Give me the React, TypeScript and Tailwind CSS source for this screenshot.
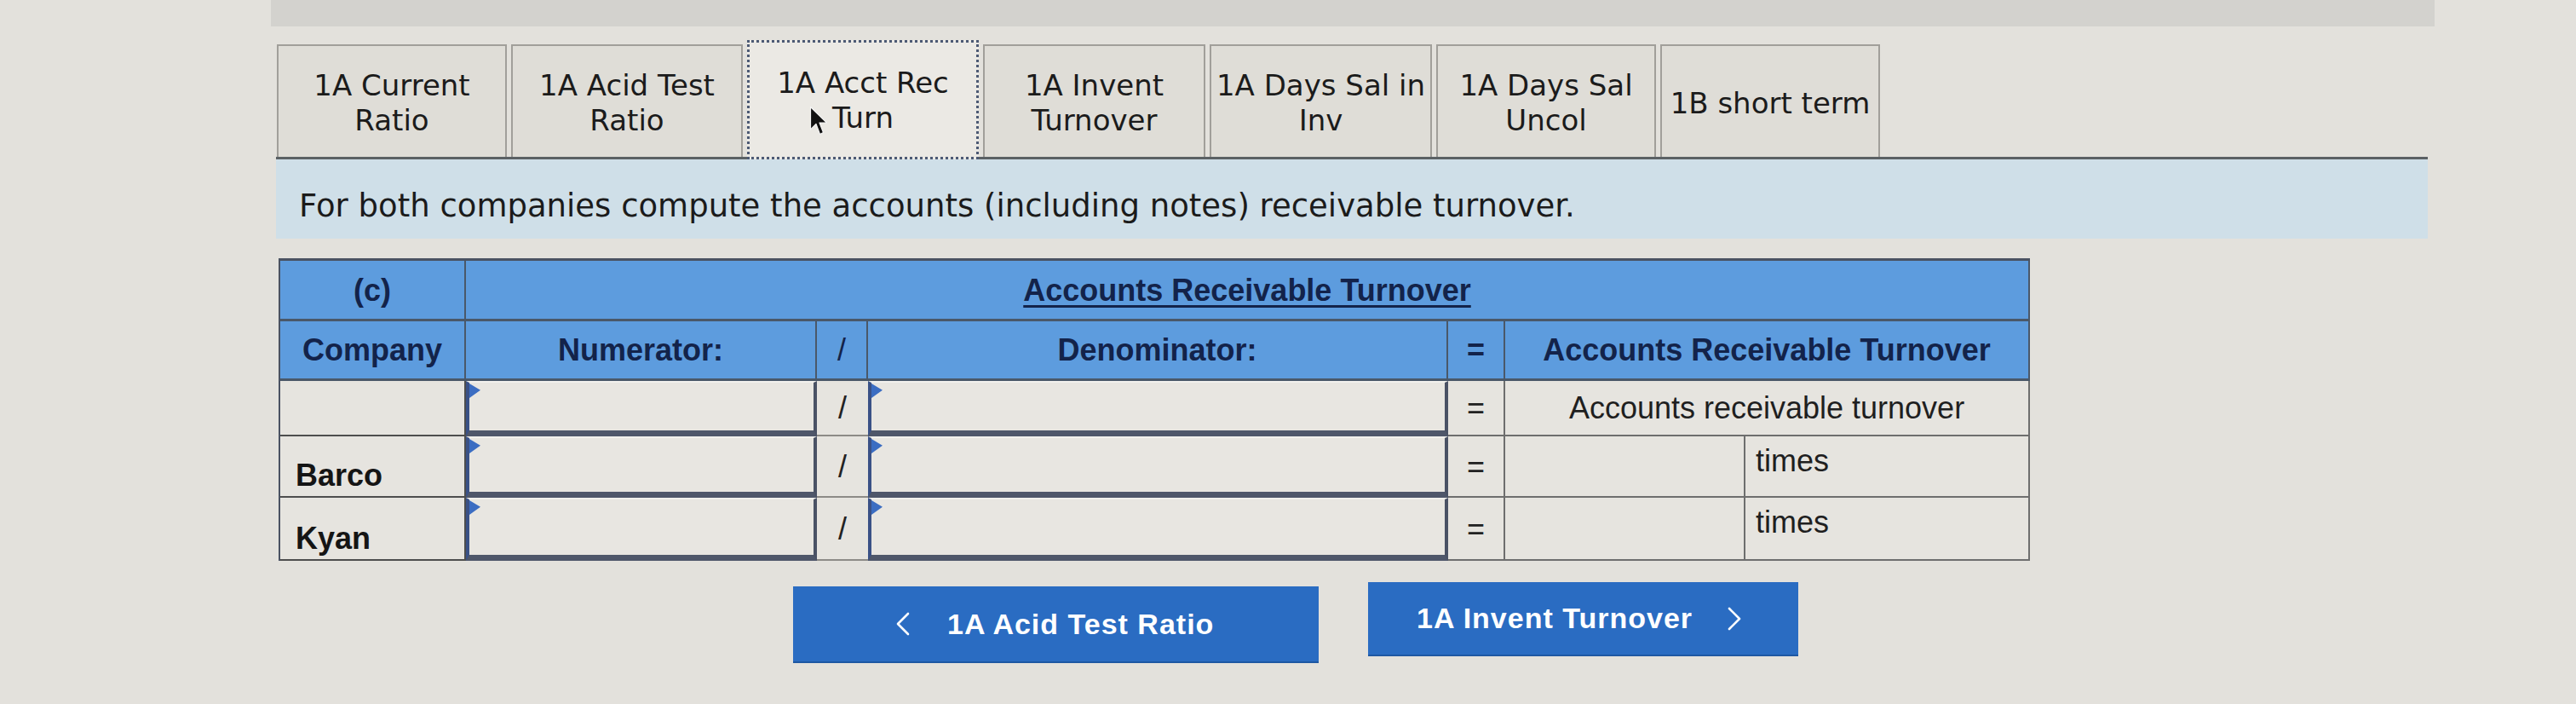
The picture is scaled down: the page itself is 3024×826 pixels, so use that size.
import React from "react";

const tabs: { lines: string[]; cls: string; active?: boolean }[] = [
  { lines: ["1A Current", "Ratio"], cls: "w-[270px]" },
  { lines: ["1A Acid Test", "Ratio"], cls: "w-[272px]" },
  { lines: ["1A Acct Rec", "Turn"], cls: "w-[272px]", active: true },
  { lines: ["1A Invent", "Turnover"], cls: "w-[261px]" },
  { lines: ["1A Days Sal in", "Inv"], cls: "w-[261px]" },
  { lines: ["1A Days Sal", "Uncol"], cls: "w-[258px]" },
  { lines: ["1B short term"], cls: "w-[258px]" },
];

function Cursor() {
  return (
    <svg
      className="absolute left-[70px] top-[74px]"
      width="24"
      height="36"
      viewBox="0 0 24 36"
    >
      <path
        d="M1.5 1.5 L1.5 28 L8 21.5 L12.5 33.5 L16.5 31.5 L12 20 L20.5 20 Z"
        fill="#111"
        stroke="#f4f4f4"
        strokeWidth="1.2"
        strokeLinejoin="round"
      />
    </svg>
  );
}

function Tab({ lines, cls, active }: { lines: string[]; cls: string; active?: boolean }) {
  if (active) {
    return (
      <div
        className={`${cls} relative h-[140px] mb-[-3px] bg-[#ebe9e4] border-[3px] border-dotted border-[#4d5a74] flex flex-col items-center justify-center pt-[2px] text-[34px] leading-[41px] text-[#1b1b1b]`}
      >
        {lines.map((l) => (
          <div key={l}>{l}</div>
        ))}
        <Cursor />
      </div>
    );
  }
  return (
    <div
      className={`${cls} h-[132px] bg-[#dfddd7] border-t-2 border-l-2 border-r-2 border-[#a19f9a] flex flex-col items-center justify-center pt-[4px] text-[34px] leading-[41px] text-[#1b1b1b]`}
    >
      {lines.map((l) => (
        <div key={l}>{l}</div>
      ))}
    </div>
  );
}

function HeadCell({
  children,
  cls = "",
}: {
  children?: React.ReactNode;
  cls?: string;
}) {
  return (
    <div
      className={`bg-[#5d9cde] border-r-2 border-b-[3px] border-[#4a5869] flex items-center justify-center font-bold text-[#13234a] ${cls}`}
    >
      {children}
    </div>
  );
}

function InputCell() {
  return (
    <div className="relative bg-[#e8e6e1] border-t-2 border-t-[#f2f1ed] border-l-4 border-l-[#3a5186] border-r-4 border-r-[#4a5265] border-b-[7px] border-b-[#4f576a]">
      <div className="absolute left-0 top-[1px] w-[13px] h-[17px] bg-[#3b6dc2] [clip-path:polygon(0_0,100%_45%,0_100%)]" />
    </div>
  );
}

function CompanyCell({ name }: { name?: string }) {
  return (
    <div className="bg-[#e6e4df] border-r-2 border-b-2 border-[#4e4e4e] flex items-end pl-[18px] pb-[4px] font-bold text-[#151515]">
      {name}
    </div>
  );
}

function SlashCell() {
  return (
    <div className="bg-[#e6e4df] border-b-2 border-[#8d8b87] flex items-center justify-center text-[#222]">
      /
    </div>
  );
}

function EqCell() {
  return (
    <div className="bg-[#e6e4df] border-r-2 border-b-2 border-[#6e6e6e] flex items-center justify-center text-[#222]">
      =
    </div>
  );
}

function Chevron({ dir }: { dir: "left" | "right" }) {
  return (
    <svg width="18" height="28" viewBox="0 0 18 28">
      <polyline
        points={dir === "left" ? "15,2 3,14 15,26" : "3,2 15,14 3,26"}
        fill="none"
        stroke="#fff"
        strokeWidth="2.6"
        strokeLinecap="round"
        strokeLinejoin="round"
      />
    </svg>
  );
}

export default function App() {
  return (
    <div className="w-[3024px] h-[826px] overflow-hidden bg-[#e3e1dc]">
      {/* top gray band */}
      <div className="ml-[318px] w-[2540px] h-[31px] bg-[#d3d2ce]" />

      {/* tabs */}
      <div
        className="ml-[325px] mt-[16px] h-[137px] flex items-end gap-[5px]"
        style={{ fontFamily: "'DejaVu Sans', Verdana, sans-serif" }}
      >
        {tabs.map((t) => (
          <Tab key={t.lines.join(" ")} {...t} />
        ))}
      </div>

      {/* description band */}
      <div
        className="ml-[324px] w-[2526px] h-[96px] bg-[#cfdfe8] border-t-[3px] border-[#5b6164] pt-[33px] pl-[27px] text-[37px] leading-[44px] text-[#1b1b1b]"
        style={{ fontFamily: "'DejaVu Sans', Verdana, sans-serif" }}
      >
        For both companies compute the accounts (including notes) receivable turnover.
      </div>

      {/* table */}
      <div
        className="ml-[327px] mt-[23px] w-[2056px] border-t-[3px] border-l-2 border-[#4a5262] grid grid-cols-[218px_412px_60px_681px_67px_282px_334px] grid-rows-[71px_70px_65px_72px_74px] text-[36px] leading-[41px]"
        style={{ fontFamily: "'Liberation Sans', Arial, sans-serif" }}
      >
        {/* row 1 */}
        <HeadCell>(c)</HeadCell>
        <HeadCell cls="col-span-6">
          <span className="underline decoration-[3px] underline-offset-[5px] decoration-[#13234a]">
            Accounts Receivable Turnover
          </span>
        </HeadCell>

        {/* row 2 */}
        <HeadCell>Company</HeadCell>
        <HeadCell>Numerator:</HeadCell>
        <HeadCell cls="font-normal">/</HeadCell>
        <HeadCell>Denominator:</HeadCell>
        <HeadCell>=</HeadCell>
        <HeadCell cls="col-span-2">Accounts Receivable Turnover</HeadCell>

        {/* row 3 */}
        <CompanyCell />
        <InputCell />
        <SlashCell />
        <InputCell />
        <EqCell />
        <div className="col-span-2 bg-[#e6e4df] border-r-2 border-b-2 border-[#6e6e6e] flex items-center justify-center text-[#1f1f1f]">
          Accounts receivable turnover
        </div>

        {/* row 4 */}
        <CompanyCell name="Barco" />
        <InputCell />
        <SlashCell />
        <InputCell />
        <EqCell />
        <div className="bg-[#e6e4df] border-r-2 border-b-2 border-[#6e6e6e]" />
        <div className="bg-[#e6e4df] border-r-2 border-b-2 border-[#6e6e6e] pl-[12px] pt-[8px] text-[#1f1f1f]">
          times
        </div>

        {/* row 5 */}
        <CompanyCell name="Kyan" />
        <InputCell />
        <SlashCell />
        <InputCell />
        <EqCell />
        <div className="bg-[#e6e4df] border-r-2 border-b-2 border-[#6e6e6e]" />
        <div className="bg-[#e6e4df] border-r-2 border-b-2 border-[#6e6e6e] pl-[12px] pt-[8px] text-[#1f1f1f]">
          times
        </div>
      </div>

      {/* nav buttons */}
      <div
        className="ml-[931px] mt-[25px] flex items-start gap-[58px] text-[34px] tracking-[1px] font-bold text-white"
        style={{ fontFamily: "'Liberation Sans', Arial, sans-serif" }}
      >
        <div className="mt-[5px] w-[617px] h-[90px] bg-[#2a6cc2] border-b-2 border-[#1e58a3] flex items-center pl-[120px]">
          <Chevron dir="left" />
          <span className="ml-[43px]">1A Acid Test Ratio</span>
        </div>
        <div className="w-[505px] h-[87px] bg-[#2a6cc2] border-b-2 border-[#1e58a3] flex items-center pl-[57px]">
          <span>1A Invent Turnover</span>
          <span className="ml-[40px] flex">
            <Chevron dir="right" />
          </span>
        </div>
      </div>
    </div>
  );
}
